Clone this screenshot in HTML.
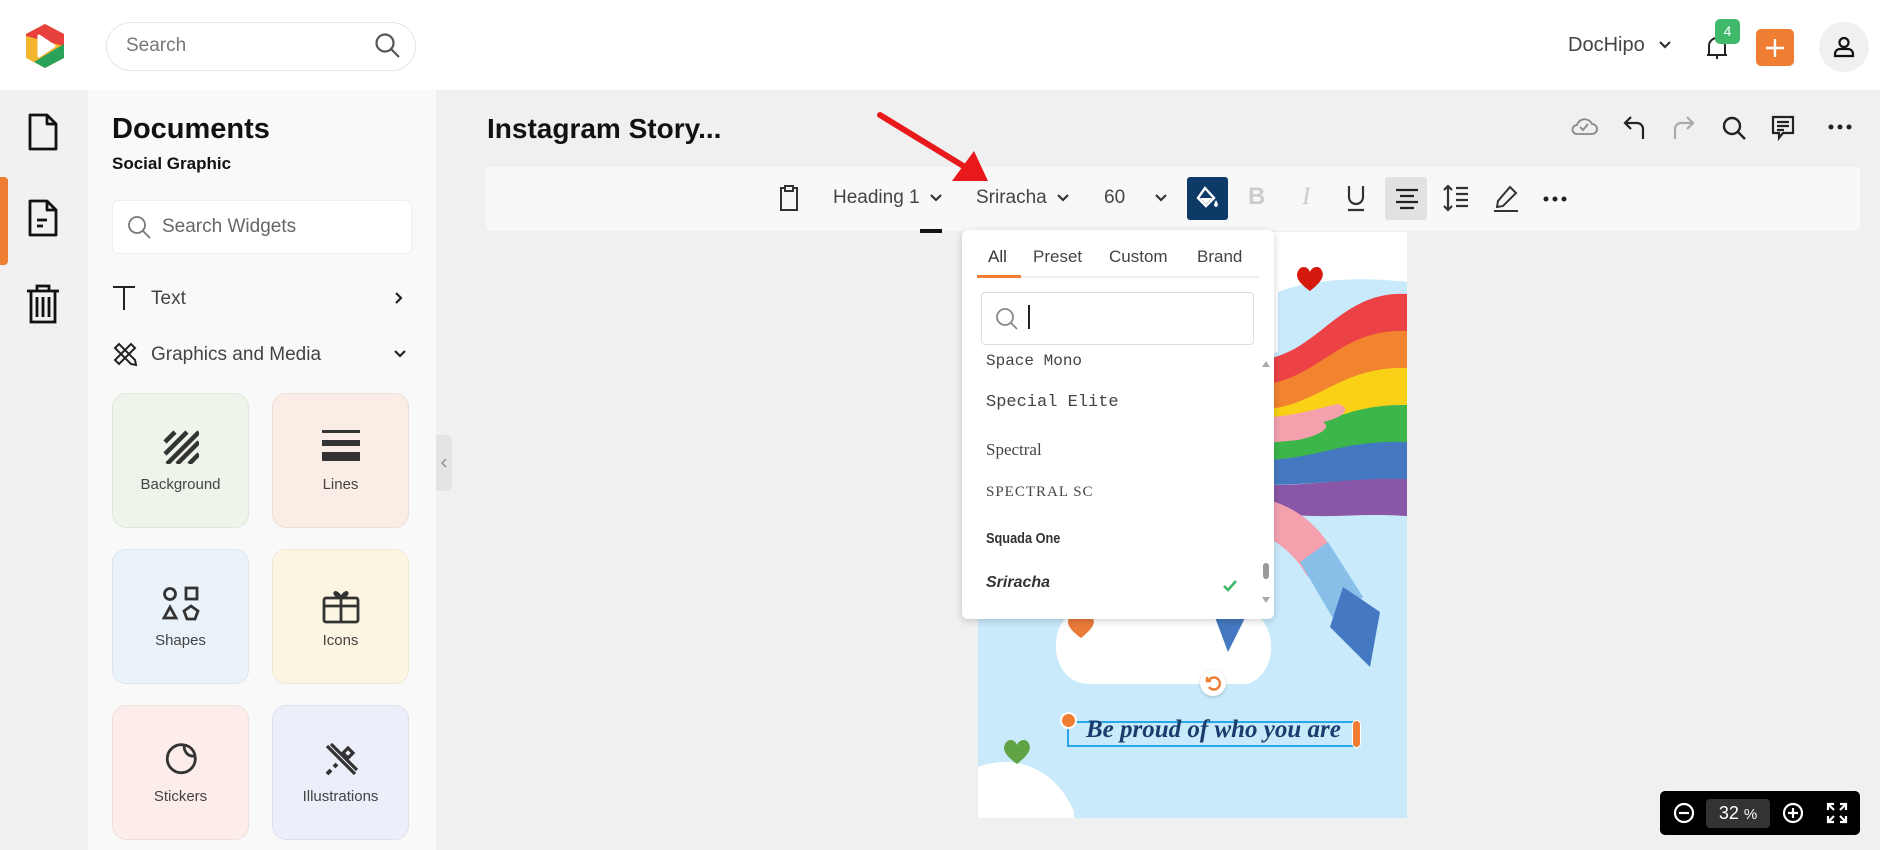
<!DOCTYPE html>
<html><head><meta charset="utf-8"><style>
*{margin:0;padding:0;box-sizing:border-box}
body{width:1880px;height:850px;overflow:hidden;background:#f0f0f0;font-family:"Liberation Sans",sans-serif;position:relative;color:#222}
.a{position:absolute}
.hdr{left:0;top:0;width:1880px;height:90px;background:#fff}
.rail{left:0;top:90px;width:88px;height:760px;background:#f1f1f1}
.panel{left:88px;top:90px;width:348px;height:760px;background:#f9f9f9}
.card{width:137px;height:135px;border-radius:14px;border:1px solid rgba(0,0,0,.05);text-align:center;font-size:15px;color:#444}
.card svg{position:absolute;left:50%;top:36px;transform:translateX(-50%)}
.card span{position:absolute;left:0;right:0;top:82px}
.fi{position:absolute;left:24px;color:#444;font-size:17px}
</style></head><body>
<div class="a hdr"></div>
<svg class="a" style="left:22px;top:22px" width="46" height="48" viewBox="0 0 46 48">
<path d="M23 2 L42 12 L42 36 L23 46 L4 36 L4 12Z" fill="#f2b52c"/>
<path d="M23 2 L42 12 L42 24 L4 14 L4 12Z" fill="#e8403c"/>
<path d="M42 22 L42 36 L23 46 L12 40 Z" fill="#2ba25a"/>
<path d="M17 14 L32 24 L17 34Z" fill="#fff" stroke="#fff" stroke-width="3" stroke-linejoin="round"/>
</svg>
<div class="a" style="left:106px;top:22px;width:310px;height:49px;border:1px solid #e6e6e6;border-radius:25px;background:#fff"></div>
<div class="a" style="left:126px;top:35px;font-size:19px;color:#777">Search</div>
<svg class="a" style="left:374px;top:32px" width="28" height="28" viewBox="0 0 28 28" fill="none" stroke="#555" stroke-width="2.2"><circle cx="11" cy="11" r="8.5"/><path d="M17.5 17.5 L25 25"/></svg>
<div class="a" style="left:1568px;top:34px;font-size:20px;color:#444">DocHipo</div>
<svg class="a" style="left:1658px;top:40px" width="14" height="10" viewBox="0 0 14 10" fill="none" stroke="#333" stroke-width="2.2"><path d="M2 2 L7 7 L12 2"/></svg>
<svg class="a" style="left:1704px;top:33px" width="26" height="30" viewBox="0 0 26 30" fill="none" stroke="#222" stroke-width="2"><path d="M5 22 V13 a8 8 0 0 1 16 0 V22 H3 h20 M13 22 v4"/></svg>
<div class="a" style="left:1715px;top:19px;width:25px;height:25px;background:#3fb86a;border-radius:5px;color:#fff;font-size:14px;text-align:center;line-height:25px">4</div>
<div class="a" style="left:1756px;top:29px;width:38px;height:37px;background:#ef7d32;border-radius:5px"></div>
<svg class="a" style="left:1763px;top:36px" width="24" height="24" viewBox="0 0 24 24" stroke="#fff" stroke-width="2.4"><path d="M12 3 V21 M3 12 H21"/></svg>
<div class="a" style="left:1819px;top:22px;width:50px;height:50px;border-radius:50%;background:#f0f0f0"></div>
<svg class="a" style="left:1832px;top:36px" width="24" height="22" viewBox="0 0 24 22" fill="none" stroke="#111" stroke-width="2.2"><circle cx="12" cy="6.5" r="4.5"/><path d="M3 20 V18 a5 5 0 0 1 5-5 h8 a5 5 0 0 1 5 5 V20Z"/></svg>

<div class="a rail"></div>
<div class="a" style="left:0;top:177px;width:8px;height:88px;background:#ef7d32;border-radius:0 4px 4px 0"></div>
<svg class="a" style="left:27px;top:112px" width="32" height="40" viewBox="0 0 32 40" fill="none" stroke="#111" stroke-width="2.8" stroke-linejoin="round"><path d="M3 3 H20 L29 12 V37 H3Z M20 3 V12 H29"/></svg>
<svg class="a" style="left:27px;top:198px" width="32" height="40" viewBox="0 0 32 40" fill="none" stroke="#111" stroke-width="2.8" stroke-linejoin="round"><path d="M3 3 H20 L29 12 V37 H3Z M20 3 V12 H29 M10 22 H20 M10 28 H16"/></svg>
<svg class="a" style="left:25px;top:283px" width="36" height="42" viewBox="0 0 36 42" fill="none" stroke="#111" stroke-width="2.8"><path d="M2 8 H34 M12 8 V3 H24 V8 M6 8 V39 H30 V8 M12 14 V34 M18 14 V34 M24 14 V34"/></svg>

<div class="a panel"></div>
<div class="a" style="left:112px;top:113px;font-size:29px;font-weight:bold;color:#111">Documents</div>
<div class="a" style="left:112px;top:154px;font-size:17px;font-weight:bold;color:#111">Social Graphic</div>
<div class="a" style="left:112px;top:200px;width:300px;height:54px;background:#fff;border:1px solid #eee;border-radius:6px"></div>
<svg class="a" style="left:127px;top:215px" width="25" height="25" viewBox="0 0 25 25" fill="none" stroke="#777" stroke-width="1.8"><circle cx="10" cy="10" r="8"/><path d="M16 16 L23 23"/></svg>
<div class="a" style="left:162px;top:216px;font-size:19px;color:#666">Search Widgets</div>
<svg class="a" style="left:112px;top:285px" width="24" height="26" viewBox="0 0 24 26" stroke="#222" stroke-width="2" fill="none"><path d="M1 2 H23 M12 2 V25"/></svg>
<div class="a" style="left:151px;top:288px;font-size:19px;color:#444">Text</div>
<svg class="a" style="left:394px;top:291px" width="10" height="14" viewBox="0 0 10 14" fill="none" stroke="#222" stroke-width="2.2"><path d="M2 2 L7 7 L2 12"/></svg>
<svg class="a" style="left:112px;top:341px" width="26" height="26" viewBox="0 0 26 26" fill="none" stroke="#222" stroke-width="2"><path d="M3 7 L19 23 L24 24 L23 19 L7 3Z M3 19 L19 3 L23 7 L7 23Z"/></svg>
<div class="a" style="left:151px;top:344px;font-size:19px;color:#444">Graphics and Media</div>
<svg class="a" style="left:393px;top:349px" width="14" height="10" viewBox="0 0 14 10" fill="none" stroke="#222" stroke-width="2.2"><path d="M2 2 L7 7 L12 2"/></svg>

<div class="a card" style="left:112px;top:393px;background:#edf5ea"><svg width="36" height="34" viewBox="0 0 36 34" stroke="#333" stroke-width="4.5"><path d="M2 12 L12 2 M2 24 L24 2 M4 34 L36 2 M14 34 L36 12 M26 34 L36 24"/></svg><span>Background</span></div>
<div class="a card" style="left:272px;top:393px;background:#f9ede5"><svg width="38" height="32" viewBox="0 0 38 32" fill="#333"><rect y="0" width="38" height="3"/><rect y="10" width="38" height="6"/><rect y="22" width="38" height="9"/></svg><span>Lines</span></div>
<div class="a card" style="left:112px;top:549px;background:#eaf2fa"><svg width="38" height="36" viewBox="0 0 38 36" fill="none" stroke="#333" stroke-width="2.8"><circle cx="8" cy="8" r="5.5"/><rect x="24" y="2" width="11" height="11"/><path d="M8 21 L14 32 H2Z M29 20 L36 25 L33 33 H25 L22 25Z"/></svg><span>Shapes</span></div>
<div class="a card" style="left:272px;top:549px;background:#fcf5e2"><svg width="38" height="38" viewBox="0 0 38 38" fill="none" stroke="#333" stroke-width="2.8"><rect x="2" y="12" width="34" height="24" rx="2"/><path d="M2 20 H36 M19 12 V36 M19 12 C14 2 8 8 19 12 C24 2 30 8 19 12"/></svg><span>Icons</span></div>
<div class="a card" style="left:112px;top:705px;background:#fcecea"><svg width="34" height="34" viewBox="0 0 34 34" fill="none" stroke="#333" stroke-width="2.8"><path d="M20 3 A14 14 0 1 0 31 14 C24 15 20 10 20 3Z M20 3 C26 4 30 8 31 14"/></svg><span>Stickers</span></div>
<div class="a card" style="left:272px;top:705px;background:#eceef9"><svg width="36" height="36" viewBox="0 0 36 36" fill="none" stroke="#333" stroke-width="3.2"><path d="M4 4 L32 32 M8 2 L34 28 M25 6 L30 11 L25 16 L20 11Z" /><path d="M4 32 L8 28 M11 25 L14 22" stroke-width="4"/></svg><span>Illustrations</span></div>
<div class="a" style="left:436px;top:435px;width:16px;height:56px;background:#e4e4e4;border-radius:0 6px 6px 0"></div>
<svg class="a" style="left:440px;top:457px" width="8" height="12" viewBox="0 0 8 12" fill="none" stroke="#999" stroke-width="1.6"><path d="M6 2 L2 6 L6 10"/></svg>

<div class="a" style="left:487px;top:113px;font-size:28px;font-weight:bold;color:#111">Instagram Story...</div>
<svg class="a" style="left:1570px;top:115px" width="28" height="22" viewBox="0 0 28 22" fill="none" stroke="#888" stroke-width="1.8"><path d="M7 19 H22 a5 5 0 0 0 0-10 a8 8 0 0 0-15 1 a4.5 4.5 0 0 0 0 9Z M10 12 L13 15 L18 9"/></svg>
<svg class="a" style="left:1622px;top:114px" width="26" height="26" viewBox="0 0 26 26" fill="none" stroke="#222" stroke-width="2.2"><path d="M9 3 L3 9 L9 15 M3 9 H15 a6 6 0 0 1 6 6 V25"/></svg>
<svg class="a" style="left:1670px;top:114px" width="26" height="26" viewBox="0 0 26 26" fill="none" stroke="#aaa" stroke-width="2.2"><path d="M17 3 L23 9 L17 15 M23 9 H11 a6 6 0 0 0-6 6 V25"/></svg>
<svg class="a" style="left:1721px;top:115px" width="26" height="26" viewBox="0 0 26 26" fill="none" stroke="#222" stroke-width="2.4"><circle cx="11" cy="11" r="8"/><path d="M17 17 L24 24"/></svg>
<svg class="a" style="left:1771px;top:115px" width="24" height="26" viewBox="0 0 24 26" fill="none" stroke="#222" stroke-width="2.2"><path d="M2 2 H22 V18 H12 L8 23 V18 H2Z M6 7 H18 M6 11 H18 M6 15 H13"/></svg>
<svg class="a" style="left:1828px;top:124px" width="24" height="6" viewBox="0 0 24 6" fill="#222"><circle cx="3" cy="3" r="2.5"/><circle cx="12" cy="3" r="2.5"/><circle cx="21" cy="3" r="2.5"/></svg>

<div class="a" style="left:486px;top:167px;width:1374px;height:64px;background:#f8f8f8;border-radius:4px"></div>
<div class="a" style="left:920px;top:229px;width:22px;height:4px;background:#111"></div>
<svg class="a" style="left:778px;top:184px" width="22" height="28" viewBox="0 0 22 28" fill="none" stroke="#333" stroke-width="2"><path d="M7 4 H3 V26 H19 V4 H15 M7 2 H15 V7 H7Z"/></svg>
<div class="a" style="left:833px;top:187px;font-size:19px;color:#444">Heading 1</div>
<svg class="a" style="left:929px;top:193px" width="14" height="10" viewBox="0 0 14 10" fill="none" stroke="#333" stroke-width="2.2"><path d="M2 2 L7 7 L12 2"/></svg>
<div class="a" style="left:976px;top:187px;font-size:19px;color:#444">Sriracha</div>
<svg class="a" style="left:1056px;top:193px" width="14" height="10" viewBox="0 0 14 10" fill="none" stroke="#333" stroke-width="2.2"><path d="M2 2 L7 7 L12 2"/></svg>
<div class="a" style="left:1104px;top:187px;font-size:19px;color:#444">60</div>
<svg class="a" style="left:1154px;top:193px" width="14" height="10" viewBox="0 0 14 10" fill="none" stroke="#333" stroke-width="2.2"><path d="M2 2 L7 7 L12 2"/></svg>
<div class="a" style="left:1187px;top:177px;width:41px;height:43px;background:#0d3a66;border-radius:3px"></div>
<svg class="a" style="left:1196px;top:186px" width="24" height="26" viewBox="0 0 24 26" fill="#fff"><path d="M9 2 L18 12 L10 20 L2 12Z" fill="none" stroke="#fff" stroke-width="2.4"/><path d="M4 12 H16 L10 18Z"/><path d="M20 14 C22 18 23 20 20 21 C17 20 18 18 20 14Z"/></svg>
<div class="a" style="left:1248px;top:183px;font-size:24px;font-weight:bold;color:#ccc">B</div>
<div class="a" style="left:1302px;top:183px;font-size:25px;font-style:italic;color:#ccc;font-family:'Liberation Serif',serif">I</div>
<svg class="a" style="left:1345px;top:184px" width="22" height="28" viewBox="0 0 22 28" fill="none" stroke="#333" stroke-width="2.2"><path d="M4 2 V13 a7 7 0 0 0 14 0 V2 M3 26 H19"/></svg>
<div class="a" style="left:1385px;top:177px;width:42px;height:43px;background:#e2e2e2;border-radius:3px"></div>
<svg class="a" style="left:1395px;top:188px" width="24" height="22" viewBox="0 0 24 22" stroke="#222" stroke-width="2.2"><path d="M1 2 H23 M5 8 H19 M1 14 H23 M5 20 H19"/></svg>
<svg class="a" style="left:1443px;top:184px" width="26" height="28" viewBox="0 0 26 28" fill="none" stroke="#333" stroke-width="2.2"><path d="M5 2 V26 M1 6 L5 2 L9 6 M1 22 L5 26 L9 22 M13 4 H25 M13 10 H25 M13 16 H25 M13 22 H25"/></svg>
<svg class="a" style="left:1492px;top:184px" width="28" height="28" viewBox="0 0 28 28" fill="none" stroke="#333" stroke-width="2"><path d="M18 3 L24 9 L11 22 L5 23 L6 17Z M2 27 H26"/></svg>
<svg class="a" style="left:1543px;top:196px" width="24" height="6" viewBox="0 0 24 6" fill="#222"><circle cx="3" cy="3" r="2.5"/><circle cx="12" cy="3" r="2.5"/><circle cx="21" cy="3" r="2.5"/></svg>

<!-- canvas -->
<svg class="a" style="left:978px;top:232px" width="429" height="586" viewBox="0 0 429 586">
<rect width="429" height="586" fill="#c9eafb"/>
<path d="M0 0 H429 V50 C380 44 330 48 300 60 L300 120 C250 130 200 120 0 130Z" fill="#fff"/>
<path d="M280 128 C340 124 360 58 429 62 V99 C360 99 340 153 280 153Z" fill="#ec4246"/>
<path d="M280 153 C340 150 360 96 429 99 V136 C360 136 340 178 280 178Z" fill="#f2832f"/>
<path d="M280 178 C340 176 360 134 429 136 V173 C360 173 340 203 280 203Z" fill="#f9d116"/>
<path d="M280 203 C340 202 360 172 429 173 V210 C360 210 340 228 280 228Z" fill="#3cb54a"/>
<path d="M280 228 C340 228 360 208 429 210 V247 C360 247 340 253 280 253Z" fill="#4478c0"/>
<path d="M280 253 C340 254 360 246 429 247 V284 C370 280 340 290 280 278Z" fill="#8a56a8"/>
<path d="M280 186 C320 184 340 176 360 172 C375 176 365 186 345 190 C355 196 340 204 320 208 L280 212Z" fill="#f4a0ad"/>
<path d="M280 266 C310 270 340 290 355 320 L330 345 C315 320 300 310 280 300Z" fill="#f4a0ad"/>
<path d="M322 330 L350 310 L385 365 L360 395Z" fill="#87bfe8"/>
<path d="M365 355 L402 380 L392 435 L352 395Z" fill="#4478c0"/>
<path d="M95 382 C70 390 70 450 110 452 L270 452 C300 440 300 395 275 380Z" fill="#fff"/>
<path d="M235 380 L270 380 L250 420Z" fill="#4478c0"/>
<path d="M0 535 C40 520 80 540 96 580 L96 586 H0Z" fill="#fff"/>
</svg>
<svg class="a" style="left:1295px;top:265px" width="30" height="28" viewBox="0 0 30 28"><path d="M15 26 C4 18 0 12 3 6 C6 0 13 1 15 7 C17 1 25 0 27 6 C30 12 25 18 15 26Z" fill="#d6190f"/></svg>
<svg class="a" style="left:1066px;top:612px" width="30" height="28" viewBox="0 0 30 28"><path d="M15 26 C4 18 0 12 3 6 C6 0 13 1 15 7 C17 1 25 0 27 6 C30 12 25 18 15 26Z" fill="#e97a38"/></svg>
<svg class="a" style="left:1002px;top:738px" width="30" height="28" viewBox="0 0 30 28"><path d="M15 26 C4 18 0 12 3 6 C6 0 13 1 15 7 C17 1 25 0 27 6 C30 12 25 18 15 26Z" fill="#5fa344"/></svg>
<div class="a" style="left:1200px;top:670px;width:26px;height:26px;border-radius:50%;background:#fff;box-shadow:0 1px 3px rgba(0,0,0,.2)"></div>
<svg class="a" style="left:1205px;top:675px" width="16" height="16" viewBox="0 0 16 16" fill="none" stroke="#ef7d32" stroke-width="2.4"><path d="M4 5 A6 6 0 1 1 4 12 M2 2 V6 H6"/></svg>
<div class="a" style="left:1067px;top:721px;width:290px;height:26px;border:2px solid #29a6e8"></div>
<div class="a" style="left:1060px;top:712px;width:17px;height:17px;border-radius:50%;background:#ef7d32;border:2px solid #fff"></div>
<div class="a" style="left:1352px;top:720px;width:9px;height:28px;border-radius:5px;background:#ef7d32;border:1px solid #fff"></div>
<div class="a" style="left:1086px;top:716px;font-size:25px;font-style:italic;font-weight:bold;color:#1b3d6e;font-family:'Liberation Serif',serif">Be proud of who you are</div>

<!-- dropdown -->
<div class="a" style="left:962px;top:230px;width:312px;height:389px;background:#fff;border-radius:6px;box-shadow:0 2px 8px rgba(0,0,0,.18)"></div>
<div class="a" style="left:977px;top:276px;width:282px;height:2px;background:#eee"></div>
<div class="a" style="left:977px;top:275px;width:44px;height:3px;background:#ef7d32"></div>
<div class="a" style="left:988px;top:247px;font-size:17px;color:#333">All</div>
<div class="a" style="left:1033px;top:247px;font-size:17px;color:#444">Preset</div>
<div class="a" style="left:1109px;top:247px;font-size:17px;color:#444">Custom</div>
<div class="a" style="left:1197px;top:247px;font-size:17px;color:#444">Brand</div>
<div class="a" style="left:981px;top:292px;width:273px;height:53px;border:1.5px solid #ddd;border-radius:4px"></div>
<svg class="a" style="left:994px;top:306px" width="26" height="26" viewBox="0 0 26 26" fill="none" stroke="#888" stroke-width="1.8"><circle cx="11" cy="11" r="8"/><path d="M17 17 L23 23"/></svg>
<div class="a" style="left:1028px;top:305px;width:2px;height:24px;background:#222"></div>
<div style="position:absolute;left:962px;top:352px;width:300px;height:264px;overflow:hidden">
<div class="fi" style="top:0px;font-family:'Liberation Mono',monospace;font-size:16px">Space Mono</div>
<div class="fi" style="top:41px;font-family:'Liberation Mono',monospace;font-size:17px">Special Elite</div>
<div class="fi" style="top:88px;font-family:'Liberation Serif',serif">Spectral</div>
<div class="fi" style="top:132px;font-family:'Liberation Serif',serif;font-size:15px;letter-spacing:1px">SPECTRAL SC</div>
<div class="fi" style="top:178px;font-weight:bold;font-size:15px;transform:scaleX(.85);transform-origin:left;color:#333">Squada One</div>
<div class="fi" style="top:222px;font-weight:bold;font-style:italic;font-size:16px;color:#333">Sriracha</div>
</div>
<svg class="a" style="left:1222px;top:579px" width="16" height="13" viewBox="0 0 16 13" fill="none" stroke="#3fb86a" stroke-width="2.6"><path d="M2 7 L6 11 L14 2"/></svg>
<svg class="a" style="left:1262px;top:361px" width="8" height="6"><path d="M0 6 L4 0 L8 6Z" fill="#aaa"/></svg>
<div class="a" style="left:1263px;top:563px;width:6px;height:16px;border-radius:3px;background:#999"></div>
<svg class="a" style="left:1262px;top:597px" width="8" height="6"><path d="M0 0 L4 6 L8 0Z" fill="#aaa"/></svg>

<svg class="a" style="left:870px;top:105px" width="130" height="85" viewBox="0 0 130 85"><path d="M10 10 L95 62" stroke="#e8191b" stroke-width="6" stroke-linecap="round"/><path d="M118 76 L82 76 L104 46Z" fill="#e8191b"/></svg>

<div class="a" style="left:1660px;top:791px;width:200px;height:44px;background:#000;border-radius:5px"></div>
<svg class="a" style="left:1672px;top:801px" width="24" height="24" viewBox="0 0 24 24" fill="none" stroke="#fff" stroke-width="2.2"><circle cx="12" cy="12" r="9"/><path d="M7 12 H17"/></svg>
<div class="a" style="left:1706px;top:799px;width:64px;height:29px;background:#333;border-radius:4px;color:#fff;font-size:18px;text-align:center;line-height:29px">32 <span style="font-size:15px">%</span></div>
<svg class="a" style="left:1781px;top:801px" width="24" height="24" viewBox="0 0 24 24" fill="none" stroke="#fff" stroke-width="2.2"><circle cx="12" cy="12" r="9"/><path d="M7 12 H17 M12 7 V17"/></svg>
<svg class="a" style="left:1826px;top:802px" width="22" height="22" viewBox="0 0 22 22" fill="none" stroke="#fff" stroke-width="2.2"><path d="M2 8 V2 H8 M2 2 L8 8 M14 2 H20 V8 M20 2 L14 8 M2 14 V20 H8 M2 20 L8 14 M20 14 V20 H14 M20 20 L14 14"/></svg>
</body></html>
